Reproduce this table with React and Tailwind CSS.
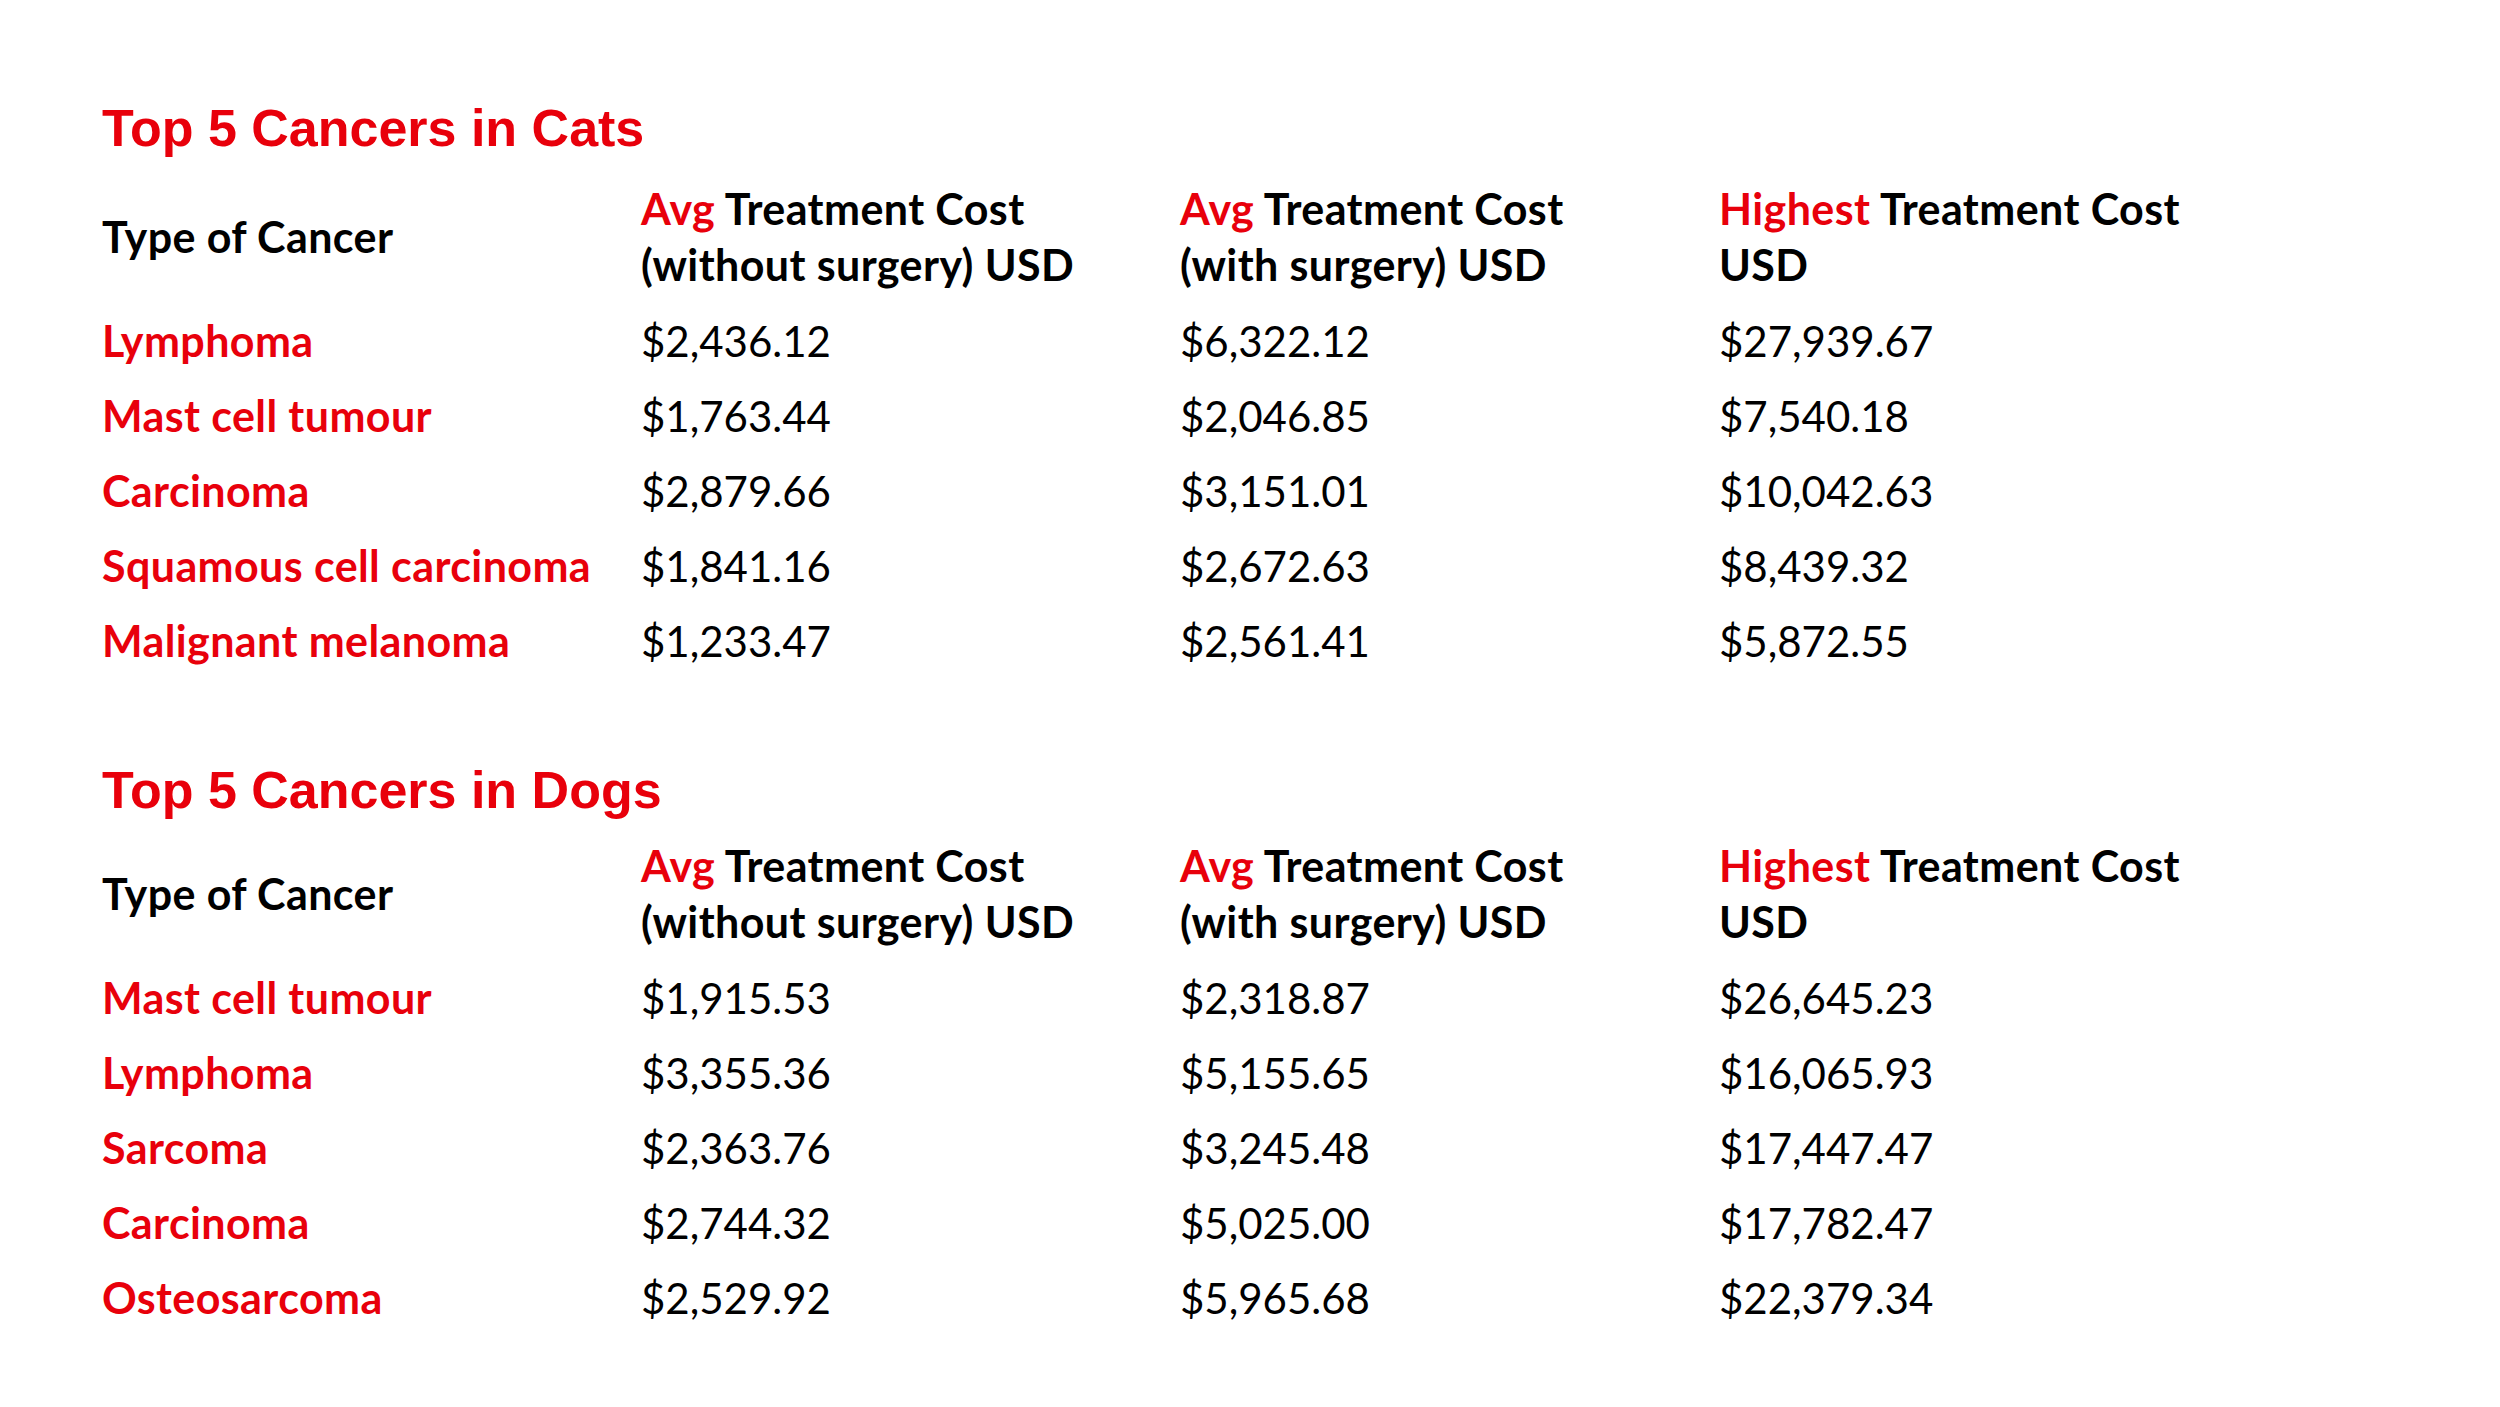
const cats = [
  ['Lymphoma', '$2,436.12', '$6,322.12', '$27,939.67'],
  ['Mast cell tumour', '$1,763.44', '$2,046.85', '$7,540.18'],
  ['Carcinoma', '$2,879.66', '$3,151.01', '$10,042.63'],
  ['Squamous cell carcinoma', '$1,841.16', '$2,672.63', '$8,439.32'],
  ['Malignant melanoma', '$1,233.47', '$2,561.41', '$5,872.55'],
];

const dogs = [
  ['Mast cell tumour', '$1,915.53', '$2,318.87', '$26,645.23'],
  ['Lymphoma', '$3,355.36', '$5,155.65', '$16,065.93'],
  ['Sarcoma', '$2,363.76', '$3,245.48', '$17,447.47'],
  ['Carcinoma', '$2,744.32', '$5,025.00', '$17,782.47'],
  ['Osteosarcoma', '$2,529.92', '$5,965.68', '$22,379.34'],
];

const CostTable = ({ title, rows, className = '', headerClass = 'mt-[23px]' }) => (
  <section className={className}>
    <h2 className="font-['Liberation_Sans',Arial,sans-serif] text-[52px] leading-[60px] font-bold text-[#e8000b]">
      {title}
    </h2>

    {/* Header */}
    <div className={`${headerClass} grid grid-cols-[repeat(4,539px)] text-[43px] leading-[56px] font-bold tracking-[0.4px] text-black`}>
      <div className="flex items-center">Type of Cancer</div>
      <div>
        <span className="text-[#e8000b]">Avg</span> Treatment Cost
        <br />
        (without surgery) USD
      </div>
      <div>
        <span className="text-[#e8000b]">Avg</span> Treatment Cost
        <br />
        (with surgery) USD
      </div>
      <div>
        <span className="text-[#e8000b]">Highest</span> Treatment Cost
        <br />
        USD
      </div>
    </div>

    {/* Rows */}
    <div className="mt-[11px] grid grid-cols-[repeat(4,539px)] text-[42px]">
      {rows.map((row) => (
        <div key={row[0]} className="contents">
          <div className="flex h-[75px] items-center text-[43px] font-bold tracking-[0.4px] text-[#e8000b]">{row[0]}</div>
          <div className="flex h-[75px] items-center text-black">{row[1]}</div>
          <div className="flex h-[75px] items-center text-black">{row[2]}</div>
          <div className="flex h-[75px] items-center text-black">{row[3]}</div>
        </div>
      ))}
    </div>
  </section>
);

export default function App() {
  return (
    <div className="min-h-screen bg-white pl-[102px] pt-[98px] font-['Lato',sans-serif]">
      <CostTable title="Top 5 Cancers in Cats" rows={cats} />
      <CostTable title="Top 5 Cancers in Dogs" rows={dogs} className="mt-[81px]" headerClass="mt-[18px]" />
    </div>
  );
}
